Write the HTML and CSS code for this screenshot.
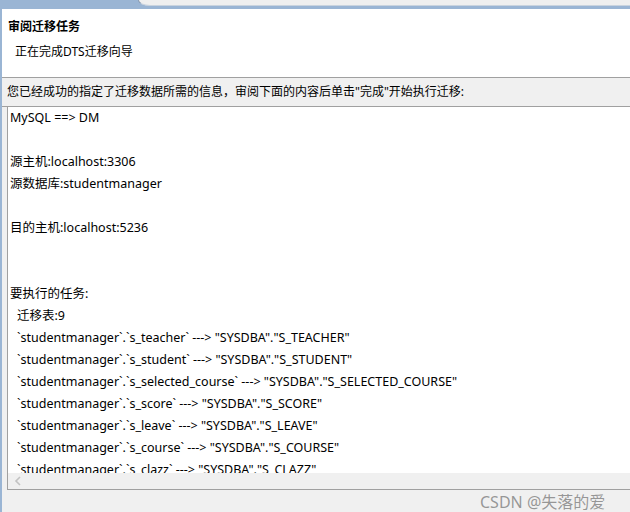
FILE: index.html
```html
<html lang="zh-CN">
<head>
  <meta charset="UTF-8">
  <title>审阅迁移任务</title>
  <link rel="stylesheet" href="styles.css">
</head>
<body>

<div class="window">
  <div class="topbar">
    <div class="tab_gap"></div>
    <div class="tab_rest"></div>
  </div>

  <div class="frame">
    <div class="header">
      <div class="title">审阅迁移任务</div>
      <div class="subtitle">正在完成DTS迁移向导</div>
    </div>

    <div class="desc">您已经成功的指定了迁移数据所需的信息，审阅下面的内容后单击"完成"开始执行迁移:</div>

    <div class="summary">
      <div class="summary_text">
        <div class="line">MySQL ==&gt; DM</div>
        <div class="line"></div>
        <div class="line">源主机:localhost:3306</div>
        <div class="line">源数据库:studentmanager</div>
        <div class="line"></div>
        <div class="line">目的主机:localhost:5236</div>
        <div class="line"></div>
        <div class="line"></div>
        <div class="line">要执行的任务:</div>
        <div class="line indent">迁移表:9</div>
        <div class="line indent">`studentmanager`.`s_teacher` ---&gt; "SYSDBA"."S_TEACHER"</div>
        <div class="line indent">`studentmanager`.`s_student` ---&gt; "SYSDBA"."S_STUDENT"</div>
        <div class="line indent">`studentmanager`.`s_selected_course` ---&gt; "SYSDBA"."S_SELECTED_COURSE"</div>
        <div class="line indent">`studentmanager`.`s_score` ---&gt; "SYSDBA"."S_SCORE"</div>
        <div class="line indent">`studentmanager`.`s_leave` ---&gt; "SYSDBA"."S_LEAVE"</div>
        <div class="line indent">`studentmanager`.`s_course` ---&gt; "SYSDBA"."S_COURSE"</div>
        <div class="line indent">`studentmanager`.`s_clazz` ---&gt; "SYSDBA"."S_CLAZZ"</div>
      </div>
      <div class="hscroll">
        <svg class="arrow" viewBox="0 0 8 10" width="8" height="10">
          <polyline points="6,1 2,5 6,9" />
        </svg>
      </div>
    </div>

    <div class="footer"></div>
  </div>

  <div class="watermark">CSDN @失落的爱</div>
</div>

</body>
</html>
```

FILE: styles.css
```css
* {
  padding: 0;
  margin: 0;
  box-sizing: border-box;
}

body {
  width: 630px;
  height: 512px;
  overflow: hidden;
  background: #f0f0f0;
  font-family: "Noto Sans", "Noto Sans CJK SC", sans-serif;
  font-size: 12px;
  color: #000;
}

.window {
  position: relative;
  width: 630px;
  height: 512px;
  display: flex;
  flex-direction: column;
}

.topbar {
  height: 9px;
  display: flex;
  background: #9ab5d4;
}

.tab_gap { width: 138px; }

.tab_rest {
  flex: 1;
  height: 6px;
  background: #efefef;
  border-left: 1px solid #8a9cb2;
  border-bottom: 1px solid #c9d3de;
  border-bottom-left-radius: 12px 6px;
}

.frame {
  flex: 1;
  display: flex;
  flex-direction: column;
  border-left: 2px solid #9ab5d4;
}

.header {
  height: 69px;
  background: #fff;
  border-bottom: 1px solid #a0a0a0;
  padding: 10px 0 0 6px;
}

.title {
  font-weight: bold;
  line-height: 16px;
}

.subtitle {
  margin-top: 9px;
  padding-left: 7px;
  line-height: 16px;
}

.desc {
  height: 29px;
  padding: 6px 0 0 5px;
  line-height: 16px;
  border-bottom: 1px solid #a0a0a0;
}

.summary {
  height: 383px;
  margin-left: 5px;
  background: #fff;
  border-left: 1px solid #a0a0a0;
  border-bottom: 1px solid #a0a0a0;
  display: flex;
  flex-direction: column;
}

.summary_text {
  flex: 1;
  overflow: hidden;
  padding-left: 2px;
  white-space: nowrap;
}

.line {
  height: 22px;
  line-height: 22px;
  font-size: 12.5px;
}

.indent { padding-left: 7px; }

.hscroll {
  height: 16px;
  background: #f0f0f0;
  display: flex;
  align-items: center;
  padding-left: 6px;
}

.arrow {
  fill: none;
  stroke: #c2c2c2;
  stroke-width: 1.6;
}

.footer { flex: 1; }

.watermark {
  position: absolute;
  left: 480px;
  top: 492px;
  font-size: 16px;
  line-height: 20px;
  color: rgba(120, 120, 120, 0.75);
}
```
